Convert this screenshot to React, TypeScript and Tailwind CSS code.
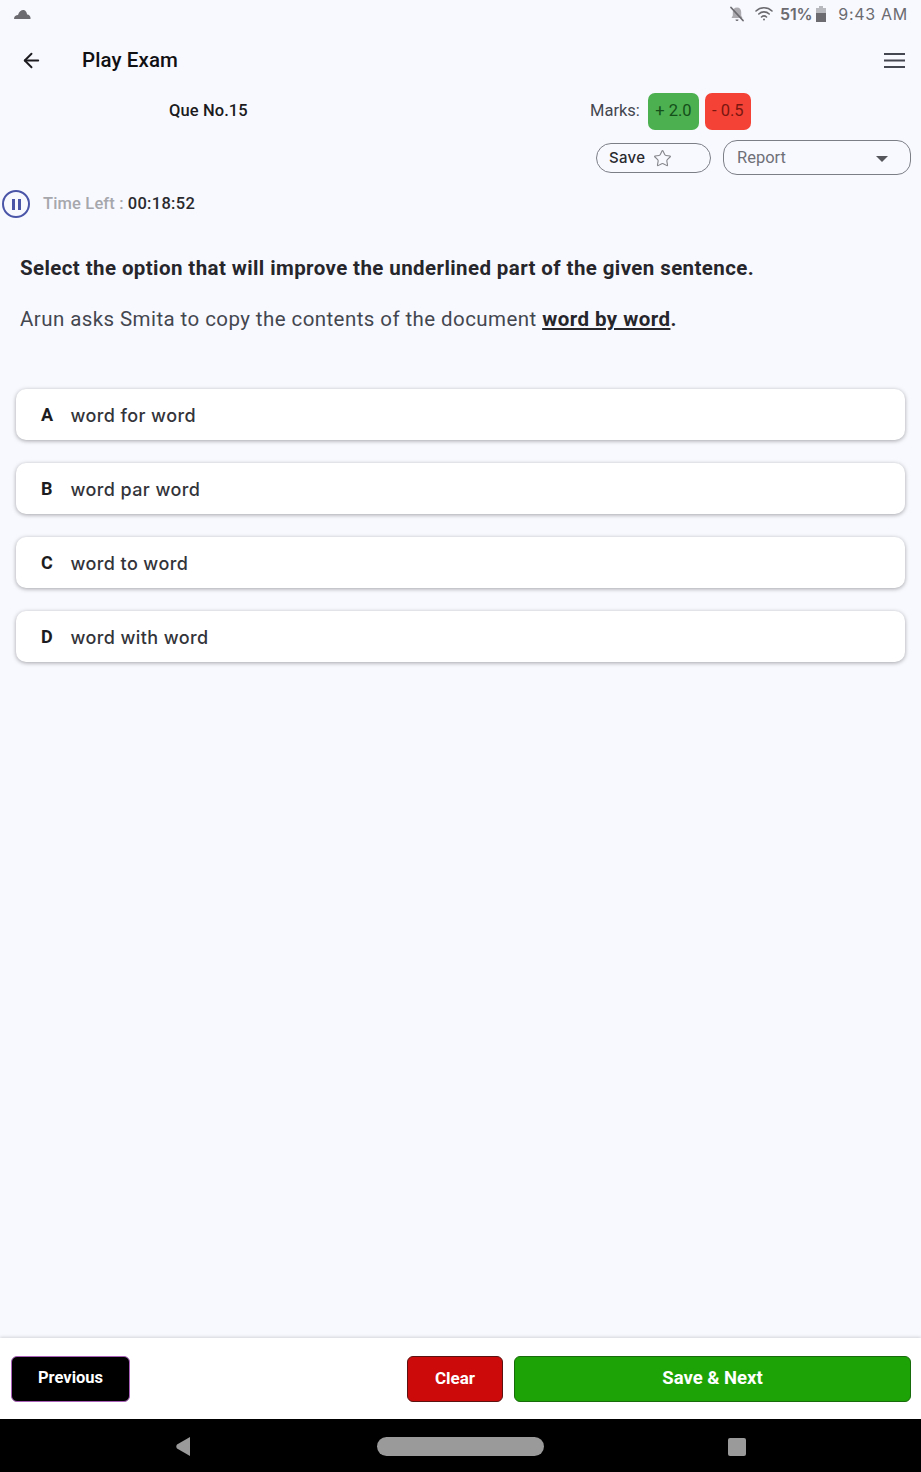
import { ArrowLeft, Star } from 'lucide-react'

const options = [
  { key: 'A', text: 'word for word' },
  { key: 'B', text: 'word par word' },
  { key: 'C', text: 'word to word' },
  { key: 'D', text: 'word with word' },
]

function StatusBar() {
  return (
    <div className="flex h-[27px] items-center justify-between pl-[13px] pr-[13px] text-[#6b6b70]">
      <svg width="18" height="12" viewBox="0 0 18 12" fill="#6b6b70">
        <path d="M1 11 C1 8 3 7 5 7 C6 3 9 1.5 11 2 C13 2.5 14 5 14 6.5 C16 6.5 18 8.5 17.5 11 Z" />
      </svg>
      <div className="flex items-center font-['Inter',sans-serif] text-[16px]">
        <svg width="16" height="16" viewBox="0 0 16 16" fill="none">
          <path d="M8 1.5c-2.6 0-4.2 2-4.2 4.5v3.5L2.5 12h11l-1.3-2.5V6c0-2.500-1.600-4.500-4.200-4.500z" fill="#6b6b70" opacity="0.55" />
          <path d="M6.500 13.500h3a1.500 1.500 0 0 1-3 0z" fill="#6b6b70" />
          <path d="M2 1.500l12 13" stroke="#6b6b70" strokeWidth="1.800" strokeLinecap="round" />
        </svg>
        <svg className="ml-[10px]" width="18" height="15" viewBox="0 0 18 15" fill="none" stroke="#6b6b70" strokeLinecap="round">
          <path d="M1 5a11.500 11.500 0 0 1 16 0" strokeWidth="1.600" />
          <path d="M3.800 8a7.500 7.500 0 0 1 10.400 0" strokeWidth="1.600" />
          <path d="M6.500 11a3.700 3.700 0 0 1 5 0" strokeWidth="1.600" />
          <circle cx="9" cy="13.500" r="1" fill="#6b6b70" stroke="none" />
        </svg>
        <span className="ml-[7px] font-semibold tracking-[-0.2px]">51%</span>
        <svg className="ml-[4px]" width="10" height="16" viewBox="0 0 10 16">
          <path d="M3 0h4v2h3v14H0V2h3z" fill="#6b6b70" opacity="0.45" />
          <path d="M0 7h10v9H0z" fill="#6b6b70" />
        </svg>
        <span className="ml-[12px] tracking-[0.7px]">9:43 AM</span>
      </div>
    </div>
  )
}

export default function App() {
  return (
    <div className="flex h-[1472px] w-[921px] flex-col overflow-hidden bg-[#f8f9ff] font-['Roboto',sans-serif]">
      <StatusBar />

      <div className="flex h-[66px] items-center pl-[20px] pr-[16px]">
        <ArrowLeft className="size-[23px] text-[#1c1c20]" strokeWidth={2} />
        <h1 className="ml-[39px] pt-[1px] text-[20.500px] font-medium tracking-[0.1px] text-[#111114]">Play Exam</h1>
        <svg className="ml-auto" width="21" height="15" viewBox="0 0 21 15" fill="#44474f">
          <path d="M0 0h21v2H0zM0 6.500h21v2H0zM0 13h21v2H0z" />
        </svg>
      </div>

      <div className="flex h-[36px] items-center pl-[169px]">
        <span className="w-[421px] text-[16.500px] font-medium tracking-[0.1px] text-[#1c1c20]">Que No.15</span>
        <span className="text-[16.500px] text-[#44474f]">Marks:</span>
        <span className="ml-[8px] flex h-[37px] w-[51px] items-center justify-center rounded-[7px] bg-[#4caf50] text-[16.500px] text-[#14501a]">
          + 2.0
        </span>
        <span className="ml-[6px] flex h-[37px] w-[46px] items-center justify-center rounded-[7px] bg-[#f44336] text-[16.500px] text-[#7a1610]">
          - 0.5
        </span>
      </div>

      <div className="mt-[11px] flex h-[35px] items-center justify-end pr-[10px]">
        <div className="flex h-[30px] w-[115px] items-center rounded-full border border-[#7d7f87] pl-[12px] pt-[1px] font-['Inter',sans-serif] text-[15px] font-medium tracking-[0.3px] text-[#2a2a2e]">
          Save
          <Star className="ml-[8px] size-[19px] text-[#85868c]" strokeWidth={1.4} />
        </div>
        <div className="ml-[12px] flex h-[35px] w-[188px] items-center justify-between rounded-[14px] border border-[#7d7f87] pl-[13px] pr-[22px] pt-[2px] text-[16.500px] text-[#6f7077]">
          Report
          <span className="h-0 w-0 border-x-[6px] border-t-[6px] border-x-transparent border-t-[#55565c]" />
        </div>
      </div>

      <div className="mt-[11px] flex h-[36px] items-center pl-[2px]">
        <div className="flex size-[28px] items-center justify-center gap-[3px] rounded-full border-[2.500px] border-[#4a55a8]">
          <span className="h-[11px] w-[3px] bg-[#4a55a8]" />
          <span className="h-[11px] w-[3px] bg-[#4a55a8]" />
        </div>
        <span className="ml-[13px] text-[16.500px] font-medium tracking-[0.15px] text-[#a6a7ac]">Time Left : </span>
        <span className="ml-[4px] text-[16.500px] font-medium tracking-[0.3px] text-[#2a2a2e]">00:18:52</span>
      </div>

      <div className="mt-[31px] pl-[20px]">
        <p className="text-[20.500px] font-bold leading-[30px] tracking-[0.4px] text-[#26262b]">
          Select the option that will improve the underlined part of the given sentence.
        </p>
        <p className="mt-[21px] text-[20.500px] leading-[30px] tracking-[0.42px] text-[#44474f]">
          Arun asks Smita to copy the contents of the document{' '}
          <span className="font-bold tracking-[0.45px] text-[#26262b] underline">word by word</span>
          <span className="font-bold text-[#26262b]">.</span>
        </p>
      </div>

      <div className="mt-[55px] flex flex-col gap-[23px] px-[16px]">
        {options.map((option) => (
          <div
            key={option.key}
            className="flex h-[51px] items-center rounded-[10px] bg-white pl-[25px] shadow-[0_1px_4px_rgba(0,0,0,0.35)]"
          >
            <span className="w-[29.500px] text-[18px] font-bold text-[#1c1c20]">{option.key}</span>
            <span className="pt-[1px] font-['Inter',sans-serif] text-[18px] font-[450] tracking-[0.4px] text-[#33343a]">{option.text}</span>
          </div>
        ))}
      </div>

      <div className="mt-auto flex h-[81px] items-center bg-white pl-[11px] pr-[10px] shadow-[0_-1px_3px_rgba(0,0,0,0.15)]">
        <button className="flex h-[46px] w-[119px] items-center justify-center rounded-[6px] border border-[#a860b8] bg-black text-[16.500px] font-bold text-white">
          Previous
        </button>
        <button className="ml-auto flex h-[46px] w-[96px] items-center justify-center rounded-[6px] border border-[#5c1210] bg-[#cc0a0a] text-[17px] font-bold text-white">
          Clear
        </button>
        <button className="ml-[11px] flex h-[46px] w-[397px] items-center justify-center rounded-[6px] border border-[#176b0a] bg-[#1ea306] text-[18.500px] font-bold text-white">
          Save &amp; Next
        </button>
      </div>

      <div className="flex h-[53px] items-center bg-black pl-[176px] pt-[2px]">
        <svg width="14" height="19" viewBox="0 0 14 19" fill="#9a9a9a">
          <path d="M14 0v19L1 11.500C0 10.500 0 8.500 1 7.500z" />
        </svg>
        <div className="ml-[187px] h-[19px] w-[167px] rounded-full bg-[#9a9a9a]" />
        <div className="ml-[184px] size-[18px] rounded-[2px] bg-[#9a9a9a]" />
      </div>
    </div>
  )
}
